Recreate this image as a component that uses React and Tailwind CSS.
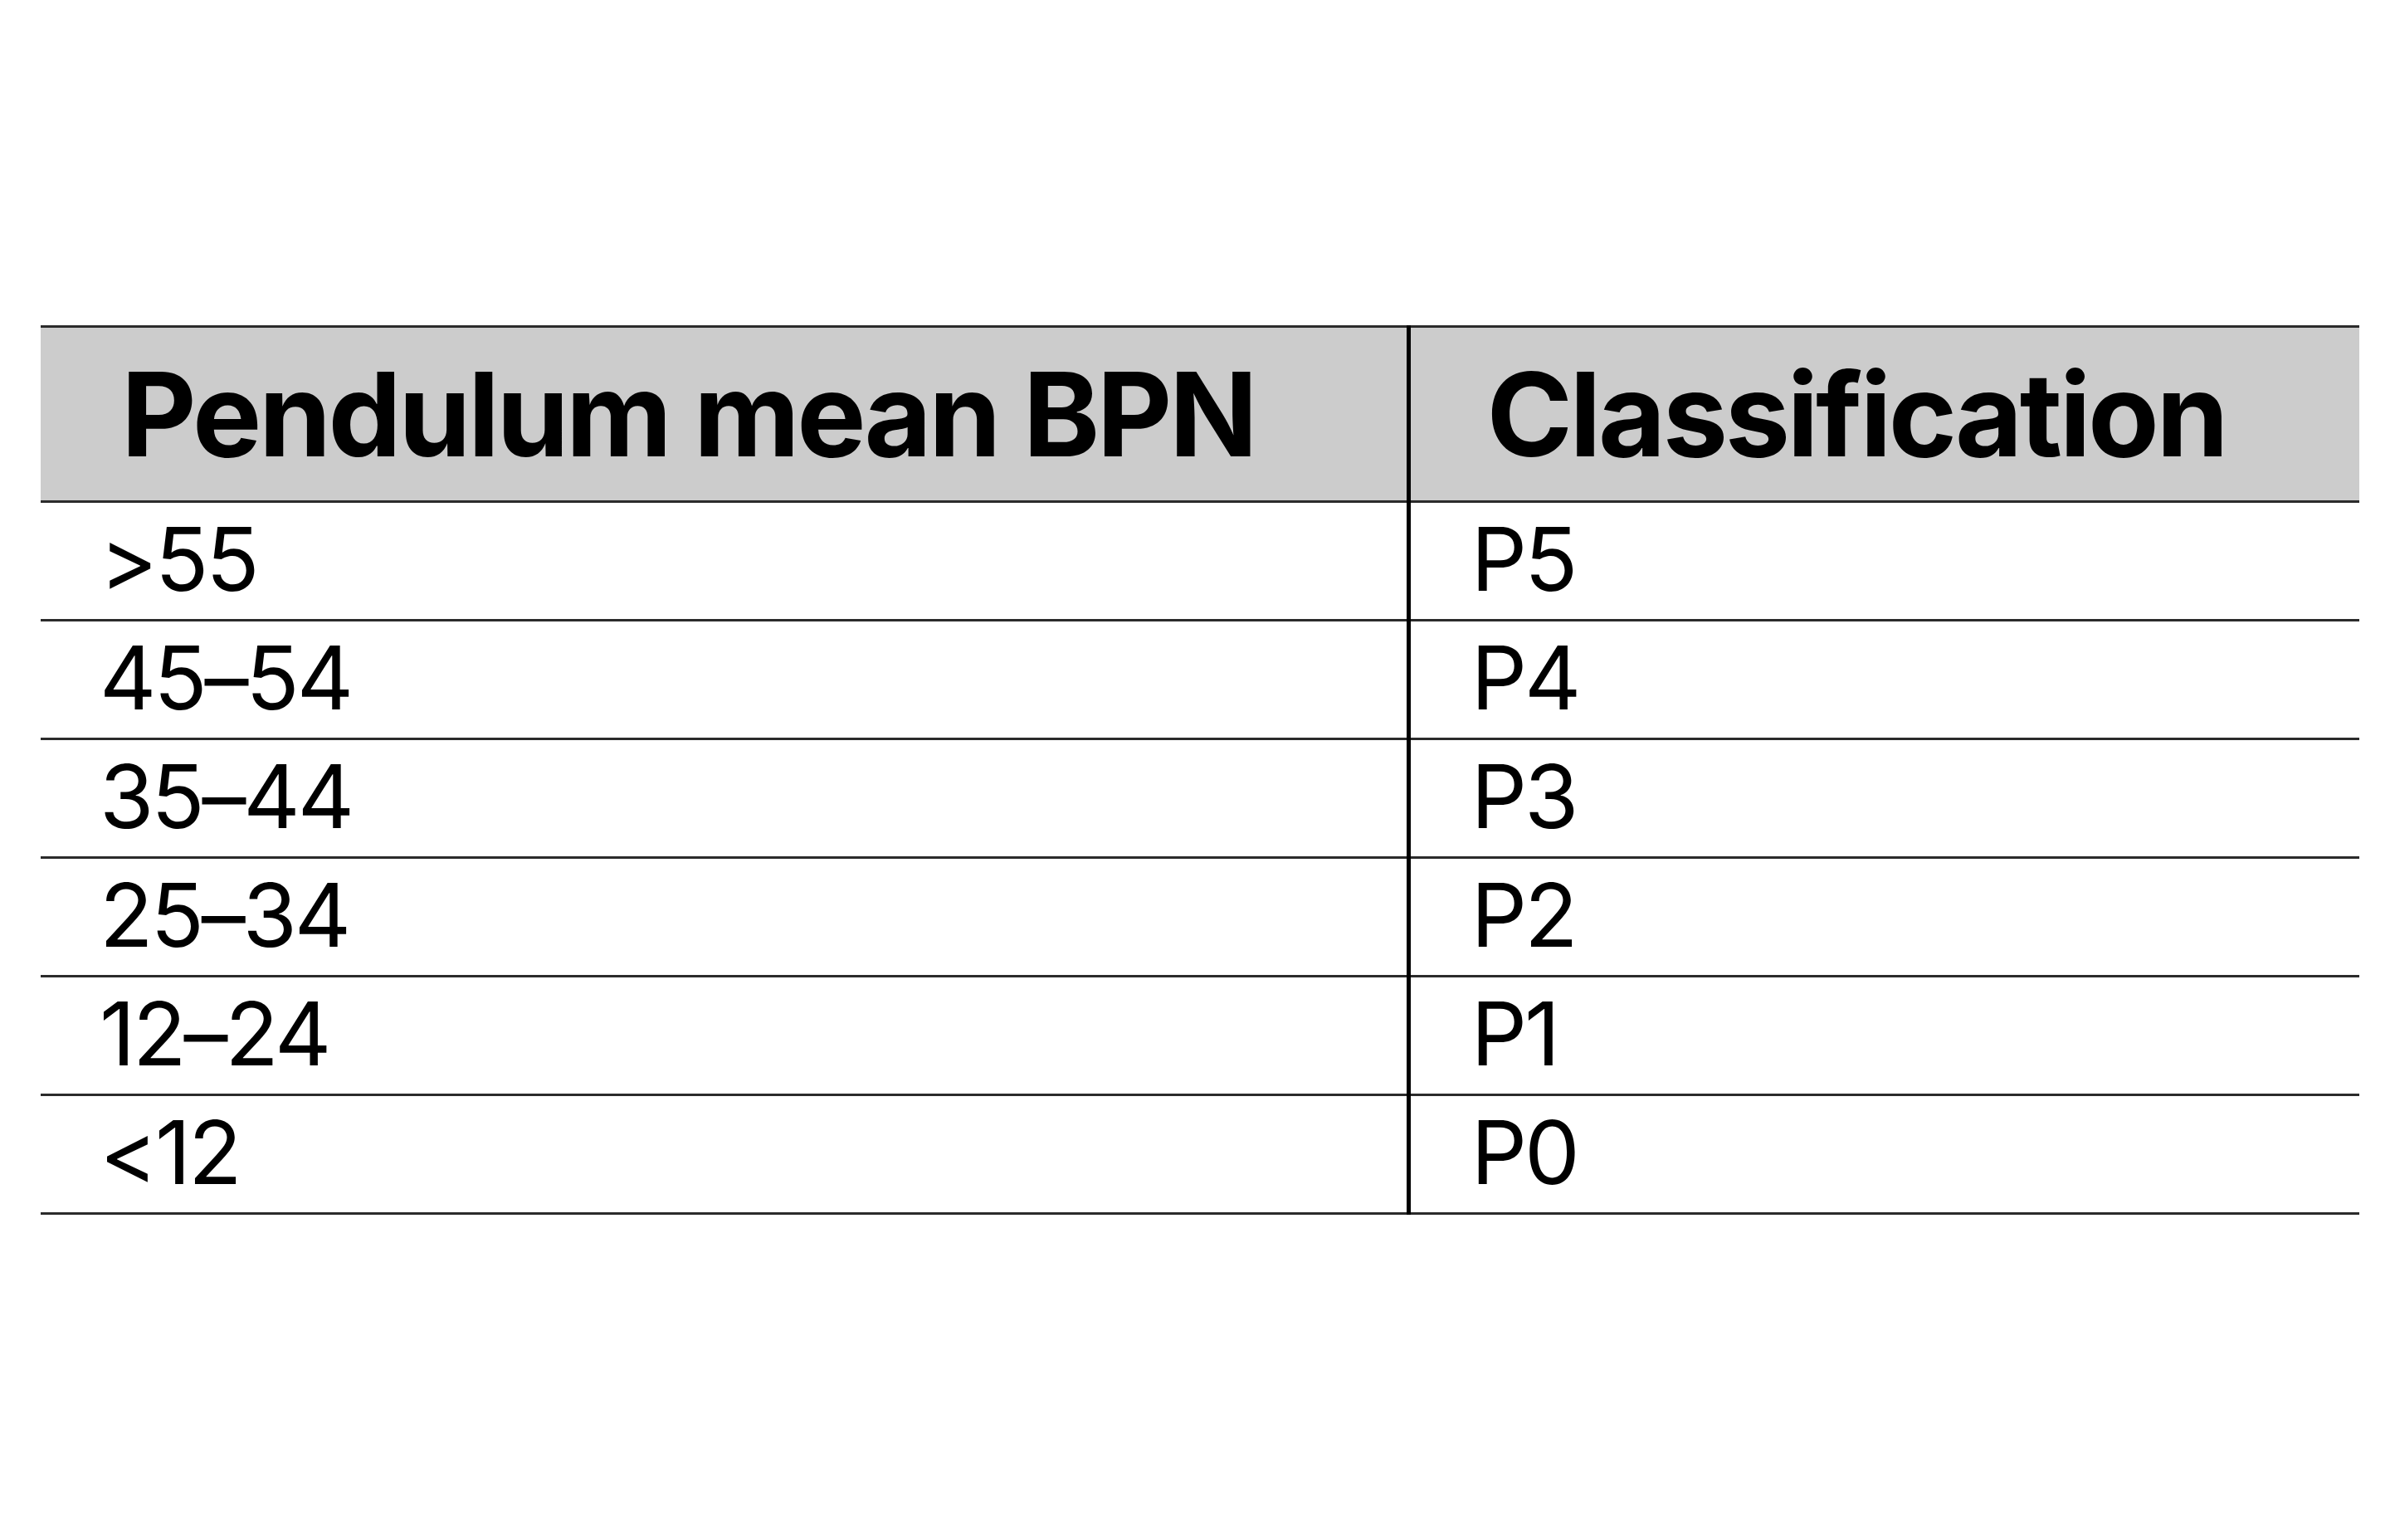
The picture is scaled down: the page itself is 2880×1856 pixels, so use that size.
const rows = [
  ['>55', 'P5'],
  ['45–54', 'P4'],
  ['35–44', 'P3'],
  ['25–34', 'P2'],
  ['12–24', 'P1'],
  ['<12', 'P0'],
];

export default function App() {
  return (
    <div className="min-h-screen bg-white pt-[392px] pl-[49px] pr-[37px] font-['Inter',sans-serif] text-black">
      <table className="w-full border-collapse table-fixed">
        <colgroup>
          <col className="w-[1648px]" />
          <col />
        </colgroup>
        <thead>
          <tr className="bg-[#cccccc] h-[211px] border-t-[3px] border-b-[3px] border-[#2b2b2b]">
            <th className="text-left font-bold text-[140px] leading-none tracking-[-0.025em] pl-[97px] border-r-[5px] border-black">
              Pendulum mean BPN
            </th>
            <th className="text-left font-bold text-[140px] leading-none tracking-[-0.025em] pl-[92px]">
              Classification
            </th>
          </tr>
        </thead>
        <tbody>
          {rows.map(([bpn, cls]) => (
            <tr key={cls} className="h-[143px] border-b-[3px] border-[#2b2b2b]">
              <td className="pl-[71px] pb-[4px] text-[106px] leading-none tracking-[-0.03em] border-r-[5px] border-black">{bpn}</td>
              <td className="pl-[73px] pb-[4px] text-[106px] leading-none tracking-[-0.03em]">{cls}</td>
            </tr>
          ))}
        </tbody>
      </table>
    </div>
  );
}
